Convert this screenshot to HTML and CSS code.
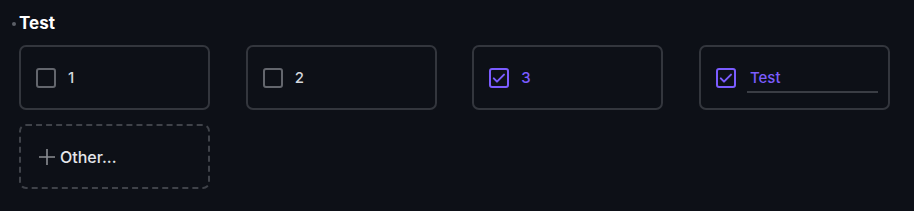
FILE: index.html
```html
<!DOCTYPE html>
<html lang="en">
<head>
    <meta charset="UTF-8">
    <meta name="viewport" content="width=device-width, initial-scale=1.0">
    <title>Options</title>
    <link rel="stylesheet" href="styles.css">
</head>
<body>
<div class="field">
    <div class="field-title"><span class="dot"></span>Test</div>
    <div class="options">
        <label class="opt">
            <span class="box"></span>
            <span class="opt-text">1</span>
        </label>
        <label class="opt">
            <span class="box"></span>
            <span class="opt-text">2</span>
        </label>
        <label class="opt checked">
            <span class="box">
                <svg viewBox="0 0 16 16" width="16" height="16"><path d="M2.8 8.4l3.2 3.2 7-7" fill="none" stroke="currentColor" stroke-width="2" stroke-linecap="round" stroke-linejoin="round"/></svg>
            </span>
            <span class="opt-text">3</span>
        </label>
        <label class="opt checked">
            <span class="box">
                <svg viewBox="0 0 16 16" width="16" height="16"><path d="M2.8 8.4l3.2 3.2 7-7" fill="none" stroke="currentColor" stroke-width="2" stroke-linecap="round" stroke-linejoin="round"/></svg>
            </span>
            <input class="opt-input" type="text" value="Test">
        </label>
        <button class="opt add">
            <svg viewBox="0 0 18 18" width="18" height="18"><path d="M9 1v16M1 9h16" stroke="currentColor" stroke-width="1.6"/></svg>
            <span>Other...</span>
        </button>
    </div>
</div>
</body>
</html>
```

FILE: styles.css
```css
*{
    box-sizing: border-box;
}
body{
    margin: 0;
    background-color: #0d1017;
    font-family: Inter, "Noto Sans", sans-serif;
    color: #d4d7dd;
}

.field{
    padding: 13px 0 0 19px;
    width: 890px;
}

.field-title{
    display: flex;
    align-items: center;
    font-size: 17px;
    font-weight: 700;
    color: #ffffff;
    height: 20px;
    margin-left: -7px;
}
.dot{
    width: 4px;
    height: 4px;
    border-radius: 50%;
    background-color: #5b5f67;
    margin-right: 3px;
    margin-top: 2px;
}

.options{
    display: grid;
    grid-template-columns: repeat(4, minmax(0, 1fr));
    column-gap: 35.5px;
    row-gap: 14px;
    margin-top: 12px;
}

.opt{
    display: flex;
    align-items: center;
    height: 65px;
    padding: 0 15px;
    border: 2px solid #33363d;
    border-radius: 7px;
    font-size: 15px;
    font-weight: 500;
    cursor: pointer;
}

.box{
    width: 20px;
    height: 20px;
    border: 2px solid #63666d;
    border-radius: 3px;
    display: flex;
    align-items: center;
    justify-content: center;
    flex-shrink: 0;
}

.opt-text{
    margin-left: 12px;
    color: #d4d7dd;
}

.checked .box{
    border-color: #7b5cff;
    color: #7b5cff;
}
.checked .opt-text{
    color: #7b5cff;
}

.opt-input{
    flex: 1;
    min-width: 0;
    margin-left: 11px;
    margin-right: -5px;
    margin-top: 2px;
    background: transparent;
    border: none;
    border-bottom: 2px solid #3a3d44;
    color: #7b5cff;
    font-family: inherit;
    font-size: 15px;
    font-weight: 500;
    padding: 3px 3px 4px;
    outline: none;
}

.add{
    background: transparent;
    border: 2px dashed #3f4249;
    color: #e4e6ea;
    font-size: 16px;
    font-family: inherit;
    font-weight: 500;
    padding-left: 17px;
}
.add svg{
    color: #8a8d93;
    margin-right: 4px;
}
```
